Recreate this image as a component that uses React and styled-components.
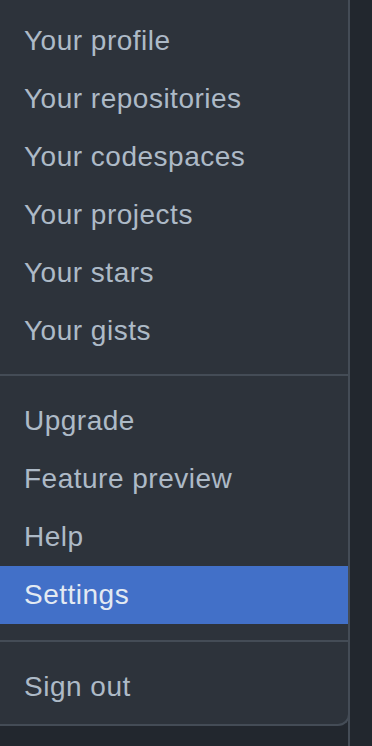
import styled, { createGlobalStyle } from 'styled-components'

const Global = createGlobalStyle`
html, body {
  margin: 0;
  padding: 0;
  background: #22272e;
}
body {
  font-family: "Liberation Sans", Arial, sans-serif;
  -webkit-font-smoothing: antialiased;
}
`

const groups = [
  { gap: 14, items: ['Your profile', 'Your repositories', 'Your codespaces', 'Your projects', 'Your stars', 'Your gists'] },
  { gap: 16, items: ['Upgrade', 'Feature preview', 'Help', 'Settings'] },
  { gap: 0, items: ['Sign out'] },
]

function App() {
  return (
    <>
      <Global />
      <Shell>
        <Menu>
          {groups.map((g, gi) => (
            <Group key={gi} gap={g.gap}>
              {gi > 0 && <Divider />}
              {g.items.map(label => (
                <Item key={label} active={label === 'Settings'}>{label}</Item>
              ))}
            </Group>
          ))}
        </Menu>
      </Shell>
    </>
  )
}

export default App

const Shell = styled.div`
width: 350px;
min-height: 746px;
box-shadow: inset -2px 0 0 #444c56;
`

const Menu = styled.div`
width: 350px;
box-sizing: border-box;
background: #2d333b;
border-right: 2px solid #444c56;
border-bottom: 2px solid #444c56;
border-bottom-right-radius: 12px;
padding: 12px 0 8px;
`

const Group = styled.div`
display: flex;
flex-direction: column;
padding-bottom: ${p => p.gap}px;
`

const Divider = styled.div`
height: 2px;
background: #444c56;
margin-bottom: 16px;
`

const Item = styled.div`
height: 58px;
line-height: 58px;
padding-left: 24px;
font-size: 28px;
letter-spacing: 0.5px;
color: ${p => (p.active ? '#e3eaf2' : '#adbac7')};
background: ${p => (p.active ? '#4270c8' : 'transparent')};
white-space: nowrap;
cursor: pointer;
`
